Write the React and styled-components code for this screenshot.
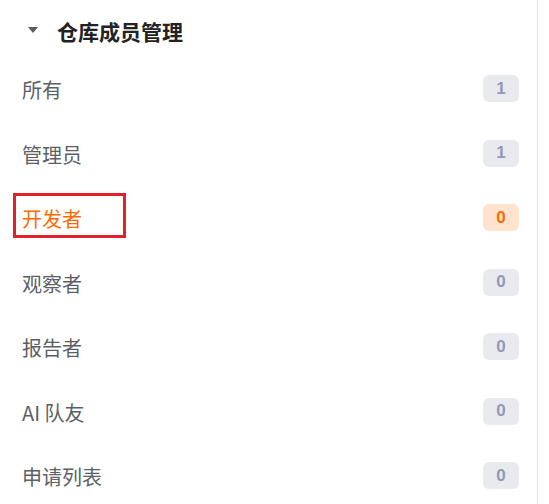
import React from "react";
import styled, { createGlobalStyle } from "styled-components";

const GlobalStyle = createGlobalStyle`
  html, body {
    margin: 0;
    padding: 0;
    background: #fff;
  }
  body {
    font-family: "Noto Sans CJK SC", "Noto Sans", sans-serif;
  }
`;

const Panel = styled.aside`
  width: 538px;
  height: 100vh;
  box-sizing: border-box;
  border-right: 1px solid #dde4ee;
  background: #fff;
  overflow: hidden;
`;

const Header = styled.div`
  display: flex;
  align-items: center;
  height: 58px;
  padding: 4px 0 0 28px;
  box-sizing: border-box;
  gap: 19px;
`;

const Caret = styled.span`
  width: 0;
  height: 0;
  border-left: 5.5px solid transparent;
  border-right: 5.5px solid transparent;
  border-top: 6px solid #5b5b5b;
  margin-top: -2px;
`;

const Title = styled.h3`
  margin: 0;
  font-size: 21px;
  font-weight: 700;
  color: #222;
`;

const Row = styled.div`
  display: flex;
  align-items: center;
  justify-content: space-between;
  height: 64.5px;
  padding: 0 18px 0 22px;
`;

const Label = styled.span`
  position: relative;
  font-size: 20px;
  line-height: 24px;
  color: ${({ active }) => (active ? "#ff6a00" : "#5c5f66")};

  ${({ marked }) =>
    marked &&
    `
    &::after {
      content: "";
      position: absolute;
      left: -9px;
      top: -14px;
      width: 113px;
      height: 45px;
      box-sizing: border-box;
      border: 3px solid #e0202a;
    }
  `}
`;

const Badge = styled.span`
  display: flex;
  align-items: center;
  justify-content: center;
  width: 36px;
  height: 27px;
  border-radius: 6px;
  margin-top: -3px;
  font-family: "Liberation Sans", Arial, sans-serif;
  font-size: 17px;
  font-weight: 700;
  background: ${({ active }) => (active ? "#ffe3cf" : "#e8eaee")};
  color: ${({ active }) => (active ? "#ff6a00" : "#8f9bb6")};
`;

const roles = [
  { name: "所有", count: 1 },
  { name: "管理员", count: 1 },
  { name: "开发者", count: 0, active: true },
  { name: "观察者", count: 0 },
  { name: "报告者", count: 0 },
  { name: "AI 队友", count: 0 },
  { name: "申请列表", count: 0 },
];

export default function App() {
  return (
    <>
      <GlobalStyle />
      <Panel>
        <Header>
          <Caret />
          <Title>仓库成员管理</Title>
        </Header>
        {roles.map((r) => (
          <Row key={r.name}>
            <Label active={r.active} marked={r.active}>
              {r.name}
            </Label>
            <Badge active={r.active}>{r.count}</Badge>
          </Row>
        ))}
      </Panel>
    </>
  );
}
